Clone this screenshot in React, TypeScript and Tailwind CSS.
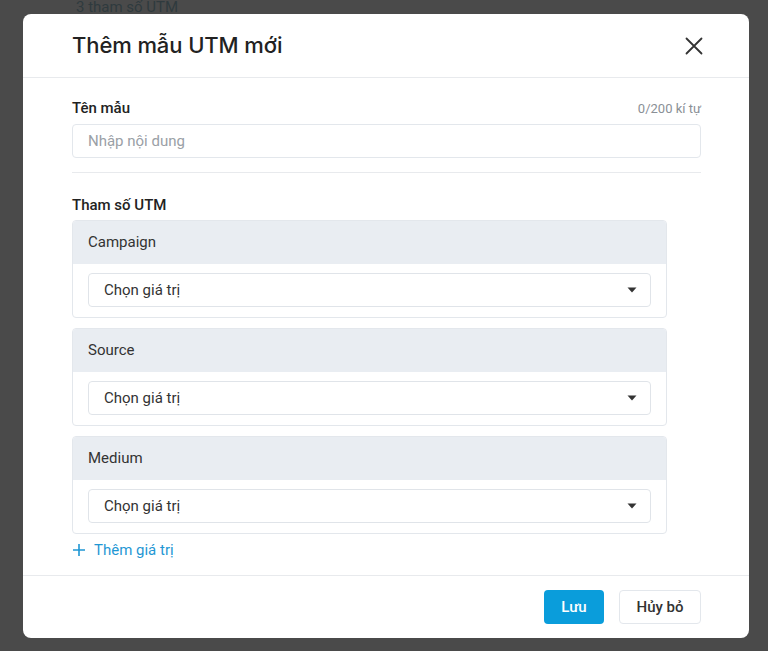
import React from "react";

const fields = ["Campaign", "Source", "Medium"];

function Caret() {
  return (
    <svg width="10" height="6" viewBox="0 0 10 6" className="shrink-0">
      <path d="M0.5 0.5 L9.5 0.5 L5 5.5 Z" fill="#333" />
    </svg>
  );
}

function ParamCard({ name }: { name: string }) {
  return (
    <div className="w-[595px] rounded-[4px] border border-[#e3e7ec] bg-white overflow-hidden">
      <div className="h-[43px] bg-[#e9edf2] flex items-center pl-[15px] text-[15px] text-[#333]">
        {name}
      </div>
      <div className="px-[15px] pt-[9px] pb-[10px]">
        <div className="h-[34px] rounded-[4px] border border-[#e0e4e9] flex items-center justify-between pl-[15px] pr-[13px] text-[15px] text-[#333]">
          <span>Chọn giá trị</span>
          <Caret />
        </div>
      </div>
    </div>
  );
}

export default function App() {
  return (
    <div
      className="relative w-[768px] h-[651px] bg-[#4a4a4a] overflow-hidden"
      style={{ fontFamily: "Roboto, 'Noto Sans', sans-serif" }}
    >
      <div className="absolute left-[76px] top-[-4px] text-[15px] text-[#2f3a3e]">3 tham số UTM</div>

      <div className="absolute left-[23px] top-[14px] w-[726px] h-[624px] bg-white rounded-[8px] flex flex-col">
        <div className="h-[64px] shrink-0 border-b border-[#e8eaed] flex items-center justify-between pl-[49px] pr-[46px]">
          <h1
            className="text-[22px] font-medium text-[#222] tracking-[-0.1px]"
            style={{ fontFamily: "Inter, Roboto, sans-serif" }}
          >
            Thêm mẫu UTM mới
          </h1>
          <svg width="18" height="18" viewBox="0 0 18 18">
            <path d="M1.5 1.5 L16.5 16.5 M16.5 1.5 L1.5 16.5" stroke="#333" strokeWidth="1.8" strokeLinecap="round" />
          </svg>
        </div>

        <div className="flex-1 pl-[49px] pr-[48px] pt-[22px]">
          <div className="flex items-end justify-between h-[19px]">
            <span className="text-[15px] font-medium text-[#222]">Tên mẫu</span>
            <span className="text-[13px] text-[#8a8f96] pb-[1px]">0/200 kí tự</span>
          </div>
          <div className="mt-[5px] h-[34px] rounded-[4px] border border-[#e3e7ec] flex items-center pl-[15px] text-[15px] text-[#9aa0a6]">
            Nhập nội dung
          </div>
          <div className="mt-[14px] border-t border-[#e8eaed]" />
          <div className="mt-[23px] text-[15px] font-medium text-[#222] leading-[19px]">Tham số UTM</div>
          <div className="mt-[5px] flex flex-col gap-[10px]">
            {fields.map((f) => (
              <ParamCard key={f} name={f} />
            ))}
          </div>
          <div className="mt-[5px] flex items-center gap-[8px] text-[15px] text-[#1f97d4]">
            <svg width="14" height="14" viewBox="0 0 14 14">
              <path d="M7 1 V13 M1 7 H13" stroke="#1f97d4" strokeWidth="1.6" />
            </svg>
            <span>Thêm giá trị</span>
          </div>
        </div>

        <div className="h-[63px] shrink-0 border-t border-[#e8eaed] flex items-start justify-end gap-[15px] pr-[48px] pt-[14px]">
          <button className="h-[34px] w-[60px] rounded-[4px] bg-[#0a9ddb] text-white text-[15px] font-medium">
            Lưu
          </button>
          <button className="h-[34px] w-[82px] rounded-[4px] border border-[#e3e7ec] bg-white text-[#333] text-[15px] font-medium">
            Hủy bỏ
          </button>
        </div>
      </div>
    </div>
  );
}
